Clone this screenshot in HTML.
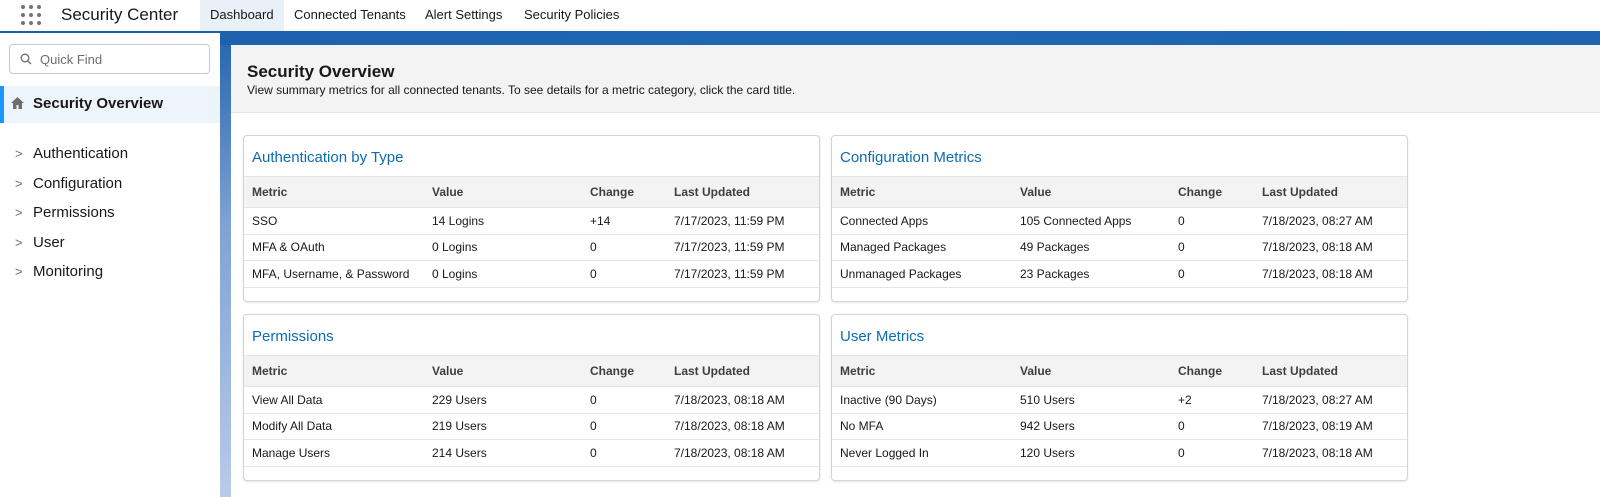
<!DOCTYPE html>
<html><head><meta charset="utf-8"><style>
*{box-sizing:border-box;margin:0;padding:0}
body{width:1600px;height:497px;overflow:hidden;font-family:"Liberation Sans",sans-serif;background:#fff;color:#181818;position:relative}
.top{position:absolute;left:0;top:0;width:1600px;height:31px;background:#fff}
.grid{position:absolute;left:21px;top:5px;width:20px;height:20px}
.grid i{position:absolute;width:4px;height:4px;border-radius:2px;background:#747474}
.app{position:absolute;left:61px;top:5px;font-size:17px;color:#181818}
.tab{position:absolute;top:0;height:31px;line-height:29px;font-size:13px;padding:0 10px}
.band{position:absolute;left:0;top:31px;width:1600px;height:14px;background:linear-gradient(90deg,#1b5fa8,#2068b4 50%,#1d63ae)}
.strip{position:absolute;left:220px;top:45px;width:11px;height:452px;background:linear-gradient(180deg,#2a68b0,#7fa3d4 40%,#b9cbe8)}
.side{position:absolute;left:0;top:33px;width:220px;height:464px;background:#fff}
.qf{position:absolute;left:9px;top:11px;width:201px;height:30px;border:1px solid #c9c9c9;border-radius:4px;font-size:13px;color:#706e6b;padding:7px 0 0 30px}
.sel{position:absolute;left:0;top:53px;width:220px;height:37px;background:#eef4fb;border-left:4px solid #1b96ff}
.sel span{position:absolute;left:29px;top:9px;font-size:15px;font-weight:bold}
.nav{position:absolute;left:33px;font-size:15px}
.chev{position:absolute;left:15px;font-size:13px;color:#706e6b}
.main{position:absolute;left:231px;top:45px;width:1369px;height:452px;background:#fff;border-radius:4px 0 0 0}
.hd{position:absolute;left:0;top:0;width:1369px;height:68px;background:#f3f3f3;border-bottom:1px solid #e5e5e5;border-radius:4px 0 0 0}
.hd h1{position:absolute;left:16px;top:17px;font-size:17px;font-weight:bold}
.hd p{position:absolute;left:16px;top:38px;font-size:12px;color:#181818}
.card{position:absolute;width:577px;height:167px;border:1px solid #d4d4d4;border-radius:4px;background:#fff;box-shadow:0 1px 2px rgba(0,0,0,.1)}
.card .t{position:absolute;left:8px;top:13px;font-size:15px;color:#0b6cb0}
.card table{position:absolute;left:0;top:40px;width:575px;border-collapse:collapse;font-size:12px}
.card th{background:#f3f3f3;height:31px;text-align:left;font-weight:bold;border-top:1px solid #e5e5e5;border-bottom:1px solid #e5e5e5;padding-left:8px;color:#3e3e3c}
.card td{height:26.5px;border-bottom:1px solid #e5e5e5;padding-left:8px}
</style></head><body>
<div class="top">
<div class="grid"><i style="left:0;top:0"></i><i style="left:8px;top:0"></i><i style="left:16px;top:0"></i><i style="left:0;top:8px"></i><i style="left:8px;top:8px"></i><i style="left:16px;top:8px"></i><i style="left:0;top:16px"></i><i style="left:8px;top:16px"></i><i style="left:16px;top:16px"></i></div>
<div class="app">Security Center</div>
<div class="tab" style="left:200px;background:#eaf0f8">Dashboard</div>
<div class="tab" style="left:284px">Connected Tenants</div>
<div class="tab" style="left:415px">Alert Settings</div>
<div class="tab" style="left:514px">Security Policies</div>
</div>
<div class="band"></div>
<div class="strip"></div>
<div class="side">
<div class="qf"><svg style="position:absolute;left:10px;top:8px" width="12" height="12" viewBox="0 0 12 12"><circle cx="5" cy="5" r="3.8" fill="none" stroke="#706e6b" stroke-width="1.3"/><path d="M8 8l3 3" stroke="#706e6b" stroke-width="1.3"/></svg>Quick Find</div>
<div class="sel"><svg style="position:absolute;left:7px;top:11px" width="13" height="12" viewBox="0 0 13 12"><path d="M6.5 0L0 6h2v6h3.5V8h2v4H11V6h2z" fill="#706e6b"/></svg><span>Security Overview</span></div>
<div class="chev" style="top:113px">&gt;</div><div class="nav" style="top:112px">Authentication</div>
<div class="chev" style="top:143px">&gt;</div><div class="nav" style="top:142px">Configuration</div>
<div class="chev" style="top:172px">&gt;</div><div class="nav" style="top:171px">Permissions</div>
<div class="chev" style="top:202px">&gt;</div><div class="nav" style="top:201px">User</div>
<div class="chev" style="top:231px">&gt;</div><div class="nav" style="top:230px">Monitoring</div>
</div>
<div class="main">
<div class="hd"><h1>Security Overview</h1><p>View summary metrics for all connected tenants. To see details for a metric category, click the card title.</p></div>
</div>
<div class="card" style="left:243px;top:135px"><div class="t">Authentication by Type</div>
<table><colgroup><col style="width:180px"><col style="width:158px"><col style="width:84px"><col></colgroup>
<tr><th>Metric</th><th>Value</th><th>Change</th><th>Last Updated</th></tr>
<tr><td>SSO</td><td>14 Logins</td><td>+14</td><td>7/17/2023, 11:59 PM</td></tr>
<tr><td>MFA &amp; OAuth</td><td>0 Logins</td><td>0</td><td>7/17/2023, 11:59 PM</td></tr>
<tr><td>MFA, Username, &amp; Password</td><td>0 Logins</td><td>0</td><td>7/17/2023, 11:59 PM</td></tr></table></div>
<div class="card" style="left:831px;top:135px"><div class="t">Configuration Metrics</div>
<table><colgroup><col style="width:180px"><col style="width:158px"><col style="width:84px"><col></colgroup>
<tr><th>Metric</th><th>Value</th><th>Change</th><th>Last Updated</th></tr>
<tr><td>Connected Apps</td><td>105 Connected Apps</td><td>0</td><td>7/18/2023, 08:27 AM</td></tr>
<tr><td>Managed Packages</td><td>49 Packages</td><td>0</td><td>7/18/2023, 08:18 AM</td></tr>
<tr><td>Unmanaged Packages</td><td>23 Packages</td><td>0</td><td>7/18/2023, 08:18 AM</td></tr></table></div>
<div class="card" style="left:243px;top:314px"><div class="t">Permissions</div>
<table><colgroup><col style="width:180px"><col style="width:158px"><col style="width:84px"><col></colgroup>
<tr><th>Metric</th><th>Value</th><th>Change</th><th>Last Updated</th></tr>
<tr><td>View All Data</td><td>229 Users</td><td>0</td><td>7/18/2023, 08:18 AM</td></tr>
<tr><td>Modify All Data</td><td>219 Users</td><td>0</td><td>7/18/2023, 08:18 AM</td></tr>
<tr><td>Manage Users</td><td>214 Users</td><td>0</td><td>7/18/2023, 08:18 AM</td></tr></table></div>
<div class="card" style="left:831px;top:314px"><div class="t">User Metrics</div>
<table><colgroup><col style="width:180px"><col style="width:158px"><col style="width:84px"><col></colgroup>
<tr><th>Metric</th><th>Value</th><th>Change</th><th>Last Updated</th></tr>
<tr><td>Inactive (90 Days)</td><td>510 Users</td><td>+2</td><td>7/18/2023, 08:27 AM</td></tr>
<tr><td>No MFA</td><td>942 Users</td><td>0</td><td>7/18/2023, 08:19 AM</td></tr>
<tr><td>Never Logged In</td><td>120 Users</td><td>0</td><td>7/18/2023, 08:18 AM</td></tr></table></div>
</body></html>
